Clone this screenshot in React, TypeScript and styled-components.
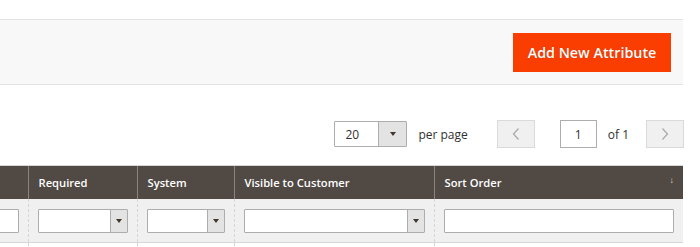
import styled, { createGlobalStyle } from "styled-components";

const GlobalStyle = createGlobalStyle`
  body {
    margin: 0;
    background: #fff;
    font-family: "Open Sans", "Liberation Sans", sans-serif;
    color: #303030;
  }
`;

const Page = styled.div`
  width: 684px;
  padding-top: 19px;
`;

const ActionBar = styled.div`
  width: 683px;
  height: 64px;
  box-sizing: content-box;
  background: #f8f8f8;
  border-top: 1px solid #e3e3e3;
  border-bottom: 1px solid #e3e3e3;
  display: flex;
  align-items: center;
  justify-content: flex-end;
`;

const PrimaryButton = styled.button`
  margin-right: 12px;
  height: 39px;
  width: 158px;
  border: none;
  border-radius: 0;
  background: #fa3d00;
  color: #fff;
  font-family: inherit;
  font-size: 14.3px;
  font-weight: 600;
  text-shadow: 0 0 1px rgba(0, 0, 0, 0.25);
  cursor: pointer;
`;

const Pager = styled.div`
  display: flex;
  align-items: center;
  justify-content: flex-end;
  margin-top: 35px;
  height: 28px;
  font-size: 12px;
  color: #303030;
`;

const SelectBox = styled.div<{ width: number; height?: number }>`
  display: flex;
  width: ${({ width }) => width}px;
  height: ${({ height }) => height ?? 24}px;
  box-sizing: border-box;
  border: 1px solid #adadad;
  border-radius: 1px;
  background: #fff;
`;

const SelectValue = styled.div`
  flex: 1;
  padding-left: 10px;
  display: flex;
  align-items: center;
  font-size: 12px;
`;

const SelectArrow = styled.div<{ width?: number }>`
  width: ${({ width }) => width ?? 27}px;
  background: #e3e3e3;
  border-left: 1px solid #adadad;
  display: flex;
  align-items: center;
  justify-content: center;
  &::after {
    content: "";
    border-left: 3px solid transparent;
    border-right: 3px solid transparent;
    border-top: 4px solid #41362f;
  }
`;

const PagerLabel = styled.span<{ gapLeft: number; gapRight: number }>`
  margin-left: ${({ gapLeft }) => gapLeft}px;
  margin-right: ${({ gapRight }) => gapRight}px;
`;

const NavButton = styled.button`
  width: 38px;
  height: 28px;
  padding: 0;
  background: #f0f0f0;
  border: 1px solid #dadada;
  display: flex;
  align-items: center;
  justify-content: center;
`;

const PageInput = styled.div`
  width: 37px;
  height: 28px;
  box-sizing: border-box;
  border: 1px solid #adadad;
  display: flex;
  align-items: center;
  justify-content: center;
  font-size: 12px;
`;

const TableWrap = styled.div`
  margin-top: 17px;
  width: 683px;
  overflow: hidden;
`;

const Table = styled.table`
  margin-left: -100px;
  border-collapse: collapse;
  table-layout: fixed;
  width: 783px;
`;

const Th = styled.th`
  background: #514943;
  color: #fff;
  height: 33px;
  padding: 0 10px;
  text-align: left;
  font-size: 11.2px;
  font-weight: 600;
  border-left: 1px solid #8a837f;
  border-top: 1px solid #d6d6d6;
  box-sizing: border-box;
  &:first-child {
    border-left: none;
  }
`;

const HeaderInner = styled.div`
  display: flex;
  align-items: center;
  justify-content: space-between;
`;

const SortMark = styled.span`
  font-size: 9px;
  font-weight: 400;
  color: #d6d3d0;
  margin-right: -1px;
  margin-top: -6px;
`;

const FilterCell = styled.td`
  background: #f0f0f0;
  padding: 10px 9px 9px;
  border-left: 1px dashed #d6d6d6;
  border-bottom: 1px solid #d6d6d6;
  &:first-child {
    border-left: none;
  }
`;

const BodyCell = styled.td`
  height: 40px;
  border-left: 1px dashed #d6d6d6;
  &:first-child {
    border-left: none;
  }
`;

const TextInput = styled.div`
  height: 24px;
  box-sizing: border-box;
  border: 1px solid #adadad;
  border-radius: 1px;
  background: #fff;
`;

function Chevron({ dir }: { dir: "left" | "right" }) {
  return (
    <svg width="8" height="14" viewBox="0 0 8 14">
      <path
        d={dir === "left" ? "M6.5 1.5 1.5 7l5 5.5" : "M1.5 1.5 6.5 7l-5 5.5"}
        fill="none"
        stroke="#a9a9a9"
        strokeWidth="1.2"
      />
    </svg>
  );
}

const columns = [
  { label: "", width: 128, filter: "text" },
  { label: "Required", width: 109, filter: "select" },
  { label: "System", width: 97, filter: "select" },
  { label: "Visible to Customer", width: 200, filter: "select" },
  { label: "Sort Order", width: 249, filter: "text", sorted: true },
];

export default function App() {
  return (
    <>
      <GlobalStyle />
      <Page>
        <ActionBar>
          <PrimaryButton>Add New Attribute</PrimaryButton>
        </ActionBar>

        <Pager>
          <SelectBox width={73} height={26}>
            <SelectValue>20</SelectValue>
            <SelectArrow />
          </SelectBox>
          <PagerLabel gapLeft={11} gapRight={29}>per page</PagerLabel>
          <NavButton>
            <Chevron dir="left" />
          </NavButton>
          <PagerLabel gapLeft={25} gapRight={0}>
            <PageInput>1</PageInput>
          </PagerLabel>
          <PagerLabel gapLeft={11} gapRight={17}>of 1</PagerLabel>
          <NavButton>
            <Chevron dir="right" />
          </NavButton>
        </Pager>

        <TableWrap>
          <Table>
            <colgroup>
              {columns.map((c, i) => (
                <col key={i} style={{ width: c.width }} />
              ))}
            </colgroup>
            <thead>
              <tr>
                {columns.map((c, i) => (
                  <Th key={i}>
                    <HeaderInner>
                      <span>{c.label}</span>
                      {c.sorted && <SortMark>↓</SortMark>}
                    </HeaderInner>
                  </Th>
                ))}
              </tr>
            </thead>
            <tbody>
              <tr>
                {columns.map((c, i) => (
                  <FilterCell key={i}>
                    {c.filter === "select" ? (
                      <SelectBox width={c.width - 19}>
                        <SelectValue />
                        <SelectArrow width={16} />
                      </SelectBox>
                    ) : (
                      <TextInput />
                    )}
                  </FilterCell>
                ))}
              </tr>
              <tr>
                {columns.map((c, i) => (
                  <BodyCell key={i} />
                ))}
              </tr>
            </tbody>
          </Table>
        </TableWrap>
      </Page>
    </>
  );
}
